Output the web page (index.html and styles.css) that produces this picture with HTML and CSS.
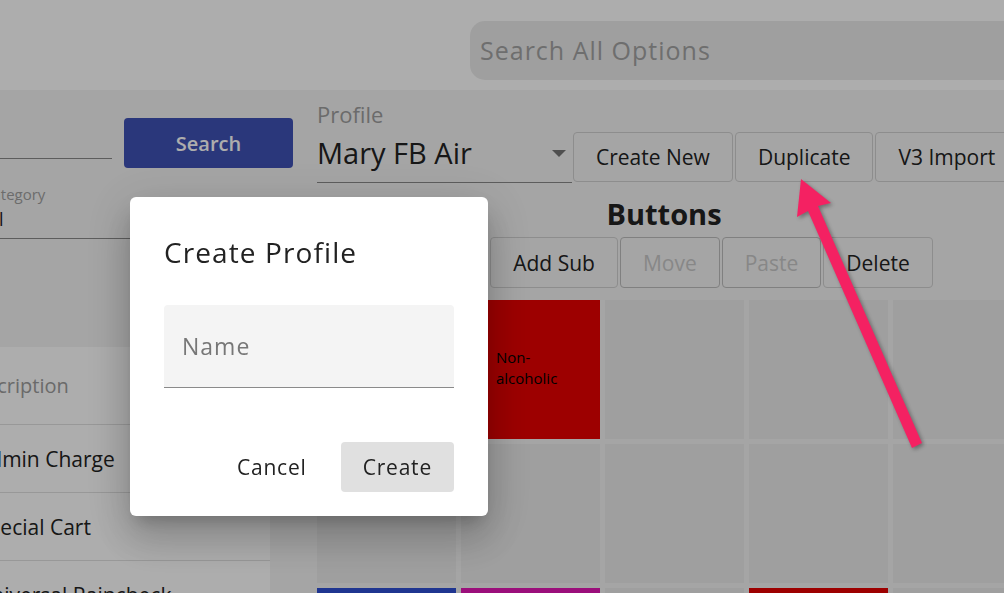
FILE: index.html
```html
<!DOCTYPE html>
<html lang="en">
<head>
    <meta charset="UTF-8">
    <meta name="viewport" content="width=device-width, initial-scale=1.0">
    <title>Button Profiles</title>
    <link rel="stylesheet" href="styles.css">
</head>
<body>
    <header class="topbar">
        <div class="global-search">Search All Options</div>
    </header>

    <main class="main">
        <aside class="sidebar">
            <div class="search-row">
                <div class="search-field"></div>
                <button class="btn-primary">Search</button>
            </div>
            <div class="category">
                <div class="field-label">Category</div>
                <div class="category-value">All</div>
            </div>
            <div class="item-list">
                <div class="list-header">Description</div>
                <div class="list-row">Admin Charge</div>
                <div class="list-row">Special Cart</div>
                <div class="list-row">Universal Raincheck</div>
            </div>
        </aside>

        <section class="editor">
            <div class="profile-row">
                <div class="profile-select">
                    <div class="profile-label">Profile</div>
                    <div class="select-value">Mary FB Air<span class="caret"></span></div>
                </div>
                <div class="btn-group">
                    <button class="btn-outline">Create New</button>
                    <button class="btn-outline">Duplicate</button>
                    <button class="btn-outline">V3 Import</button>
                </div>
            </div>

            <h2 class="section-title">Buttons</h2>

            <div class="toolbar">
                <button class="btn-outline">Add</button>
                <button class="btn-outline">Add Sub</button>
                <button class="btn-outline" disabled>Move</button>
                <button class="btn-outline" disabled>Paste</button>
                <button class="btn-outline">Delete</button>
            </div>

            <div class="tile-grid">
                <div class="tile"></div>
                <div class="tile tile-red">Non-alcoholic</div>
                <div class="tile"></div>
                <div class="tile"></div>
                <div class="tile"></div>

                <div class="tile"></div>
                <div class="tile"></div>
                <div class="tile"></div>
                <div class="tile"></div>
                <div class="tile"></div>

                <div class="tile tile-blue"></div>
                <div class="tile tile-magenta"></div>
                <div class="tile"></div>
                <div class="tile tile-red"></div>
                <div class="tile"></div>
            </div>
        </section>
    </main>

    <!-- modal -->
    <div class="backdrop"></div>
    <div class="dialog">
        <h3 class="dialog-title">Create Profile</h3>
        <div class="filled-input">Name</div>
        <div class="dialog-actions">
            <button class="btn-text">Cancel</button>
            <button class="btn-grey">Create</button>
        </div>
    </div>

    <!-- annotation arrow -->
    <svg class="annotation" width="1004" height="593" viewBox="0 0 1004 593">
        <polygon points="801,179 831,203 818,206 922,443 912,448 808,211 797,217" fill="#f42162"/>
    </svg>
</body>
</html>
```

FILE: styles.css
```css
body {
    margin: 0;
    width: 1004px;
    height: 593px;
    overflow: hidden;
    background-color: #f4f4f4;
    font-family: "Open Sans", "Noto Sans", sans-serif;
    color: #222;
}

button {
    font-family: inherit;
    cursor: pointer;
}

/* top bar */
.topbar {
    height: 90px;
    background-color: #fff;
    overflow: hidden;
}

.global-search {
    margin: 21px 0 0 470px;
    width: 620px;
    height: 59px;
    line-height: 59px;
    padding-left: 10px;
    border-radius: 15px;
    background-color: #ebebeb;
    font-size: 25px;
    letter-spacing: 1px;
    color: #a3a3a3;
}

.main {
    display: flex;
    align-items: flex-start;
}

/* left column */
.sidebar {
    margin-left: -40px;
    width: 333px;
    flex-shrink: 0;
    padding-top: 28px;
}

.search-row {
    display: flex;
    gap: 12px;
    height: 50px;
}

.search-field {
    flex: 1;
    height: 41px;
    box-sizing: border-box;
    border-bottom: 1px solid #8a8a8a;
}

.btn-primary {
    width: 169px;
    height: 50px;
    border: none;
    border-radius: 4px;
    background-color: #3f51b5;
    color: #fff;
    font-size: 20px;
    font-weight: 600;
}

.category {
    margin-top: 17px;
    padding-left: 23px;
    border-bottom: 1px solid #8a8a8a;
}

.field-label {
    font-size: 15px;
    line-height: 18px;
    color: #a0a0a0;
}

.category-value {
    margin-top: 2px;
    padding-bottom: 5px;
    font-size: 18px;
    line-height: 28px;
}

.item-list {
    margin-top: 108px;
    width: 310px;
    background-color: #fff;
}

.list-header,
.list-row {
    display: flex;
    align-items: center;
    box-sizing: border-box;
    border-bottom: 1px solid #e0e0e0;
    font-size: 20px;
}

.list-header {
    height: 78px;
    padding-left: 2px;
    color: #9c9c9c;
}

.list-row {
    height: 68px;
    padding-left: 16px;
    font-size: 21px;
    white-space: nowrap;
}

/* right column */
.editor {
    margin-left: 24px;
    width: 694px;
    flex-shrink: 0;
    padding-top: 11px;
}

.profile-row {
    display: flex;
    align-items: flex-end;
}

.profile-select {
    width: 255px;
    flex-shrink: 0;
}

.profile-label {
    font-size: 22px;
    line-height: 26px;
    color: #9e9e9e;
}

.select-value {
    position: relative;
    padding: 6px 0 9px;
    font-size: 29px;
    line-height: 40px;
    border-bottom: 1px solid #8a8a8a;
}

.caret {
    position: absolute;
    right: 6px;
    top: 23px;
    border-left: 7px solid transparent;
    border-right: 7px solid transparent;
    border-top: 7px solid #757575;
}

.btn-group {
    display: flex;
    gap: 2px;
    margin: 0 0 1px 1px;
    white-space: nowrap;
}

.btn-outline {
    height: 50px;
    padding: 0 22px;
    border: 1px solid #d0d0d0;
    border-radius: 4px;
    background: transparent;
    font-size: 21px;
    color: #222;
    white-space: nowrap;
}

.btn-outline:disabled {
    border-color: #bdbdbd;
    color: #c8c8c8;
    cursor: default;
}

.section-title {
    margin: 13px 0 5px;
    text-align: center;
    font-size: 29px;
    font-weight: 700;
    line-height: 36px;
}

.toolbar {
    display: flex;
    justify-content: center;
    gap: 2px;
    padding-left: 8px;
}

.toolbar .btn-outline {
    height: 51px;
}

.tile-grid {
    margin-top: 12px;
    display: grid;
    grid-template-columns: repeat(5, 139px);
    grid-auto-rows: 139px;
    gap: 5px;
}

.tile {
    display: flex;
    align-items: center;
    padding: 0 35px;
    background-color: #ebebeb;
    font-size: 15px;
    line-height: 21px;
    color: #000;
}

.tile-red {
    background-color: #e80000;
    padding-bottom: 3px;
}

.tile-blue {
    background-color: #2e4ed4;
}

.tile-magenta {
    background-color: #e517b6;
}

/* modal */
.backdrop {
    position: fixed;
    inset: 0;
    background-color: rgba(0, 0, 0, 0.32);
}

.dialog {
    position: fixed;
    left: 130px;
    top: 197px;
    width: 358px;
    box-sizing: border-box;
    padding: 35px 34px 24px;
    border-radius: 6px;
    background-color: #fff;
    box-shadow: 0 11px 15px -7px rgba(0, 0, 0, 0.2),
                0 24px 38px 3px rgba(0, 0, 0, 0.14),
                0 9px 46px 8px rgba(0, 0, 0, 0.12);
}

.dialog-title {
    margin: 0;
    font-size: 28px;
    font-weight: 500;
    line-height: 40px;
    letter-spacing: 1.1px;
    color: #222;
}

.filled-input {
    display: flex;
    align-items: center;
    height: 83px;
    box-sizing: border-box;
    margin-top: 33px;
    padding-left: 18px;
    border-radius: 4px 4px 0 0;
    border-bottom: 1px solid #8a8a8a;
    background-color: #f4f4f4;
    font-size: 23px;
    letter-spacing: 1px;
    color: #777;
}

.dialog-actions {
    display: flex;
    justify-content: flex-end;
    gap: 10px;
    margin-top: 54px;
}

.btn-text,
.btn-grey {
    height: 50px;
    border: none;
    border-radius: 4px;
    font-size: 21px;
    letter-spacing: 0.8px;
    color: #222;
}

.btn-text {
    padding: 0 24px;
    background: transparent;
}

.btn-grey {
    padding: 0 22px;
    background-color: #e0e0e0;
}

.annotation {
    position: fixed;
    left: 0;
    top: 0;
    pointer-events: none;
    filter: drop-shadow(2px 2px 2px rgba(0, 0, 0, 0.35));
}
```
